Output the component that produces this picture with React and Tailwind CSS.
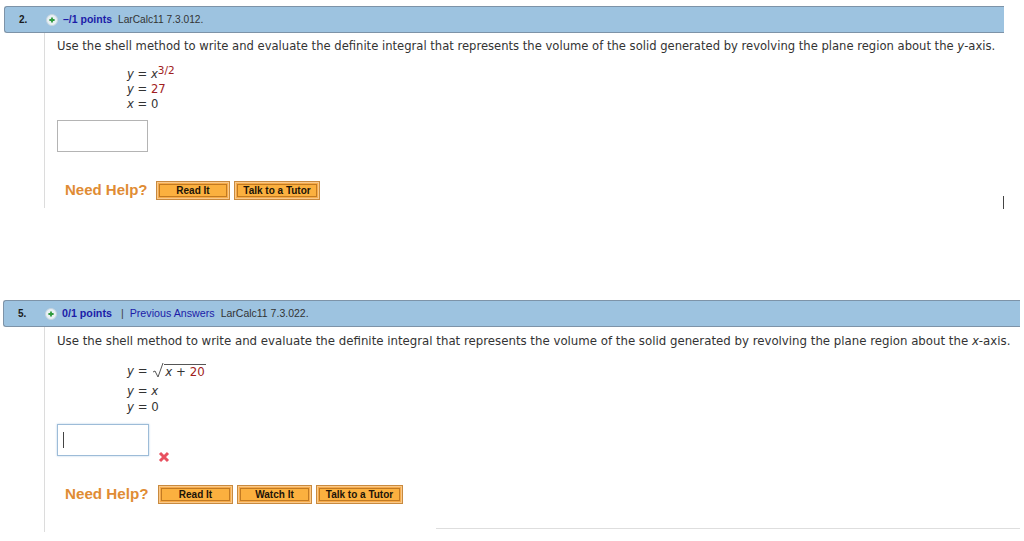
import React from "react";

function PlusIcon() {
  return (
    <svg width="12" height="12" viewBox="0 0 12 12" className="shrink-0">
      <circle cx="6" cy="6" r="5.5" fill="#e8f0f4" stroke="#c4d4de" />
      <path d="M6 3.4v5.2M3.4 6h5.2" stroke="#2f9a3c" strokeWidth="1.8" />
    </svg>
  );
}

function HelpButton({ label, width }) {
  return (
    <div
      className={`${width} h-[19px] bg-[#f6ab4a] border border-[#c98a3e] p-[2px] shadow-[inset_0_0_0_1px_#f9c88a]`}
    >
      <div className="h-full border border-[#c27a22] bg-[#fbb03f] flex items-center justify-center font-['Liberation_Sans',sans-serif] text-[10px] font-bold text-[#1c1408]">
        {label}
      </div>
    </div>
  );
}

function Header({ num, children }) {
  return (
    <div className="h-[27px] flex items-center rounded-l-[3px] bg-[#9dc3e0] border-t border-b border-l border-[#7d93a8] font-['Liberation_Sans',sans-serif] text-[#333]">
      <span className="w-[41px] pl-[14px] font-bold text-[10px] text-[#1a1a1a]">{num}</span>
      <PlusIcon />
      <div className="ml-[5px] flex items-center">{children}</div>
    </div>
  );
}

function Y({ children }) {
  return <i>{children}</i>;
}

export default function App() {
  return (
    <div className="relative w-[1024px] h-[541px] overflow-hidden bg-white font-['DejaVu_Sans',sans-serif] text-[#333]">
      {/* text cursor left in the page */}
      <div className="absolute left-[1003px] top-[196px] w-px h-[13px] bg-[#444]" />

      {/* Question 2 */}
      <section className="pt-[6px] pl-[4px] pr-[20px] h-[300px] text-[11.59px]">
        <Header num="2.">
          <span className="font-bold text-[10.5px] text-[#1c1ca8]">–/1 points</span>
          <span className="ml-[6px] text-[10.2px]">LarCalc11 7.3.012.</span>
        </Header>
        <div className="ml-[40px] h-[175px] border-l border-[#dcdcdc] pl-[12px] pt-[6px]">
          <p className="leading-[14px] whitespace-nowrap">
            Use the shell method to write and evaluate the definite integral that represents the volume of the solid generated by revolving the plane region about the <Y>y</Y>-axis.
          </p>
          <div className="ml-[70px] mt-[14px] leading-[15px]">
            <div className="h-[15px]">
              <Y>y</Y> = <Y>x</Y>
              <sup className="text-[#a02020] text-[10.5px] top-[-4px]">3/2</sup>
            </div>
            <div>
              <Y>y</Y> = <span className="text-[#a02020]">27</span>
            </div>
            <div>
              <Y>x</Y> = 0
            </div>
          </div>
          <div className="mt-[8px] w-[91px] h-[32px] border border-[#b4b4b4] bg-white" />
          <div className="mt-[27px] ml-[8px] flex items-center">
            <span className="font-['Liberation_Sans',sans-serif] text-[15px] font-bold text-[#e08c34] w-[91px]">
              Need Help?
            </span>
            <div className="flex gap-[4px]">
              <HelpButton label="Read It" width="w-[74px]" />
              <HelpButton label="Talk to a Tutor" width="w-[86px]" />
            </div>
          </div>
        </div>
      </section>

      {/* Question 5 */}
      <section className="pl-[3px] pr-[4px] text-[11.78px]">
        <Header num="5.">
          <span className="font-bold text-[10.7px] text-[#1c1ca8]">0/1 points</span>
          <span className="ml-[9px] text-[10.7px] text-[#444]">|</span>
          <span className="ml-[6px] text-[10.7px] text-[#1c1ca8]">Previous Answers</span>
          <span className="ml-[6px] text-[10.5px]">LarCalc11 7.3.022.</span>
        </Header>
        <div className="ml-[41px] h-[205px] border-l border-[#dcdcdc] pl-[12px] pt-[7px]">
          <p className="leading-[14px] whitespace-nowrap">
            Use the shell method to write and evaluate the definite integral that represents the volume of the solid generated by revolving the plane region about the <Y>x</Y>-axis.
          </p>
          <div className="ml-[70px] mt-[12px] leading-[15px]">
            <div className="flex items-end h-[19px]">
              <span className="whitespace-pre">
                <Y>y</Y> ={" "}
              </span>
              <svg width="13" height="17" viewBox="0 0 13 17" className="shrink-0">
                <path d="M2 10l2-1 3 6L12 1" fill="none" stroke="#555" strokeWidth="1" />
              </svg>
              <span className="border-t border-[#555] px-[1px] leading-[14px] whitespace-pre">
                <Y>x</Y> + <span className="text-[#a02020]">20</span>
              </span>
            </div>
            <div className="mt-[5px]">
              <Y>y</Y> = <Y>x</Y>
            </div>
            <div className="mt-[1px]">
              <Y>y</Y> = 0
            </div>
          </div>
          <div className="mt-[9px] flex items-start">
            <div className="w-[92px] h-[32px] border border-[#9dbcd8] shadow-[0_0_2px_#b8d0e6] bg-white flex items-center pl-[5px]">
              <div className="w-px h-[16px] bg-[#444]" />
            </div>
            <svg width="12" height="12" viewBox="0 0 12 12" className="ml-[9px] mt-[27px] shrink-0">
              <path d="M2 2l8 8M10 2l-8 8" stroke="#e8505f" strokeWidth="3" />
            </svg>
          </div>
          <div className="mt-[20px] ml-[8px] flex items-center">
            <span className="font-['Liberation_Sans',sans-serif] text-[15.2px] font-bold text-[#e08c34] w-[93px]">
              Need Help?
            </span>
            <div className="flex gap-[4px]">
              <HelpButton label="Read It" width="w-[75px]" />
              <HelpButton label="Watch It" width="w-[75px]" />
              <HelpButton label="Talk to a Tutor" width="w-[87px]" />
            </div>
          </div>
          <div className="mt-[22px] ml-[379px] h-[1px] bg-[#dedede]" />
        </div>
      </section>
    </div>
  );
}
